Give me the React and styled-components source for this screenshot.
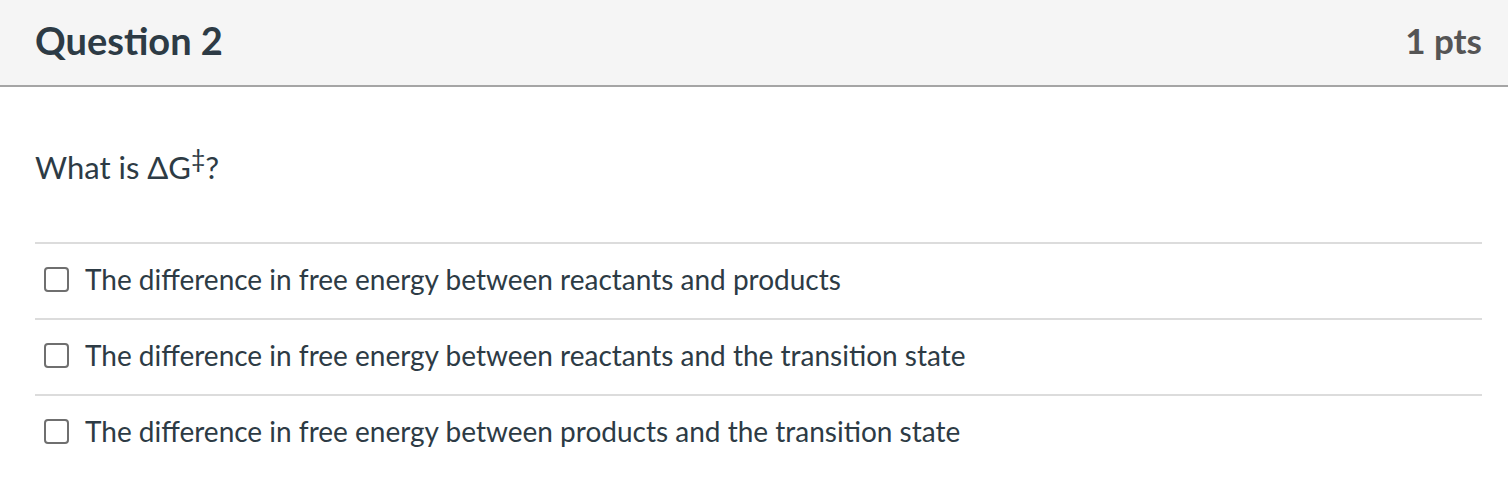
import React from 'react';
import styled, { createGlobalStyle } from 'styled-components';

const GlobalStyle = createGlobalStyle`
  html, body {
    margin: 0;
    padding: 0;
    background: #fff;
  }
  body {
    font-family: Lato, 'Open Sans', sans-serif;
    color: #2d3b45;
  }
`;

const Card = styled.div`
  width: 1508px;
  height: 502px;
  overflow: hidden;
  background: #fff;
`;

const Header = styled.div`
  box-sizing: border-box;
  height: 87px;
  display: flex;
  align-items: center;
  justify-content: space-between;
  padding: 0 26px 6px 35px;
  background: #f5f5f5;
  border-bottom: 2px solid #a5a5a5;
`;

const Title = styled.h2`
  margin: 0;
  font-size: 38px;
  font-weight: 700;
  color: #2d3b45;
`;

const Points = styled.span`
  font-size: 35px;
  font-weight: 700;
  color: #555;
`;

const Body = styled.div`
  padding: 0 26px 0 35px;
`;

const Prompt = styled.p`
  margin: 0;
  padding: 60px 0 55px;
  font-size: 31px;
  line-height: 40px;

  sup {
    font-size: 0.8em;
    line-height: 0;
    vertical-align: 0.45em;
  }
`;

const Answers = styled.div`
  display: flex;
  flex-direction: column;
`;

const Answer = styled.label`
  box-sizing: border-box;
  display: flex;
  align-items: center;
  gap: 16px;
  height: 76px;
  padding: 0 0 5px 9px;
  border-top: 2px solid #dcdcdc;
  font-size: 28px;
  color: #2d3b45;
`;

const Box = styled.span`
  box-sizing: border-box;
  flex: none;
  width: 25px;
  height: 25px;
  margin-top: 1px;
  border: 2px solid #6f6f6f;
  border-radius: 4px;
  background: #fff;
`;

const answers = [
  'The difference in free energy between reactants and products',
  'The difference in free energy between reactants and the transition state',
  'The difference in free energy between products and the transition state',
];

export default function App() {
  return (
    <Card>
      <GlobalStyle />
      <Header>
        <Title>Question 2</Title>
        <Points>1 pts</Points>
      </Header>
      <Body>
        <Prompt>
          What is ΔG<sup>‡</sup>?
        </Prompt>
        <Answers>
          {answers.map((a) => (
            <Answer key={a}>
              <Box />
              {a}
            </Answer>
          ))}
        </Answers>
      </Body>
    </Card>
  );
}
